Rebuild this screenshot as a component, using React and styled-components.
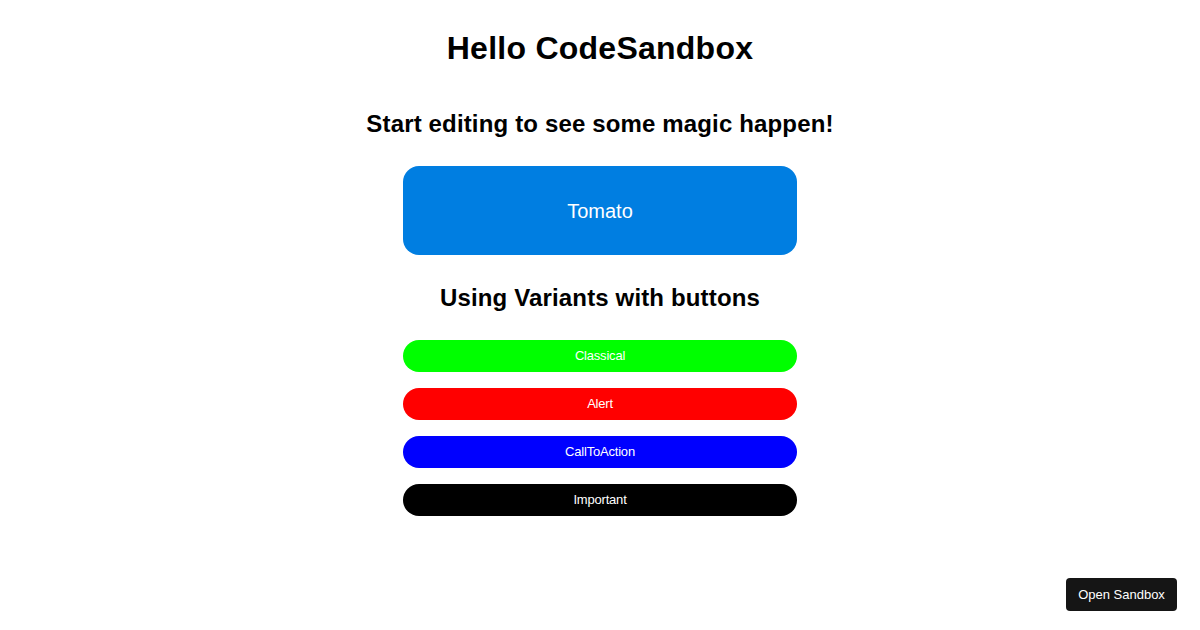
import styled, { createGlobalStyle } from "styled-components";

const GlobalStyle = createGlobalStyle`
  html, body {
    margin: 0;
    padding: 0;
    background: #ffffff;
    font-family: "Liberation Sans", Arial, sans-serif;
    color: #000;
  }
`;

const Page = styled.main`
  display: flex;
  flex-direction: column;
  align-items: center;
  text-align: center;
  padding-top: 30px;
`;

const Title = styled.h1`
  margin: 0;
  font-size: 32px;
  line-height: 37px;
  font-weight: 700;
  letter-spacing: 0.25px;
`;

const Subtitle = styled.h2`
  margin: ${(p) => p.$top}px 0 0;
  font-size: 24px;
  line-height: 28px;
  font-weight: 700;
  letter-spacing: 0.15px;
`;

const BigButton = styled.button`
  margin-top: 28px;
  width: 394px;
  height: 89px;
  padding-top: 2px;
  border: 0;
  border-radius: 16px;
  background: #007ee1;
  color: #fff;
  font-family: "Liberation Sans", Arial, sans-serif;
  font-size: 20px;
  cursor: pointer;
`;

const VariantList = styled.div`
  margin-top: 28px;
  display: flex;
  flex-direction: column;
  gap: 16px;
`;

const variantColors = {
  classical: "#00ff00",
  alert: "#ff0000",
  callToAction: "#0000ff",
  important: "#000000",
};

const VariantButton = styled.button`
  width: 394px;
  height: 32px;
  padding-bottom: 2px;
  border: 0;
  border-radius: 16px;
  background: ${(p) => variantColors[p.$variant]};
  color: #fff;
  font-family: "Liberation Sans", Arial, sans-serif;
  font-size: 13px;
  letter-spacing: -0.2px;
  cursor: pointer;
`;

const OpenSandbox = styled.a`
  position: fixed;
  right: 23px;
  bottom: 19px;
  width: 111px;
  height: 33px;
  display: flex;
  align-items: center;
  justify-content: center;
  background: #151515;
  color: #fff;
  border-radius: 4px;
  font-family: "Liberation Sans", Arial, sans-serif;
  font-size: 13px;
  text-decoration: none;
`;

export default function App() {
  return (
    <>
      <GlobalStyle />
      <Page>
        <Title>Hello CodeSandbox</Title>
        <Subtitle $top={43}>Start editing to see some magic happen!</Subtitle>
        <BigButton>Tomato</BigButton>
        <Subtitle $top={29}>Using Variants with buttons</Subtitle>
        <VariantList>
          <VariantButton $variant="classical">Classical</VariantButton>
          <VariantButton $variant="alert">Alert</VariantButton>
          <VariantButton $variant="callToAction">CallToAction</VariantButton>
          <VariantButton $variant="important">Important</VariantButton>
        </VariantList>
      </Page>
      <OpenSandbox href="#">Open Sandbox</OpenSandbox>
    </>
  );
}
